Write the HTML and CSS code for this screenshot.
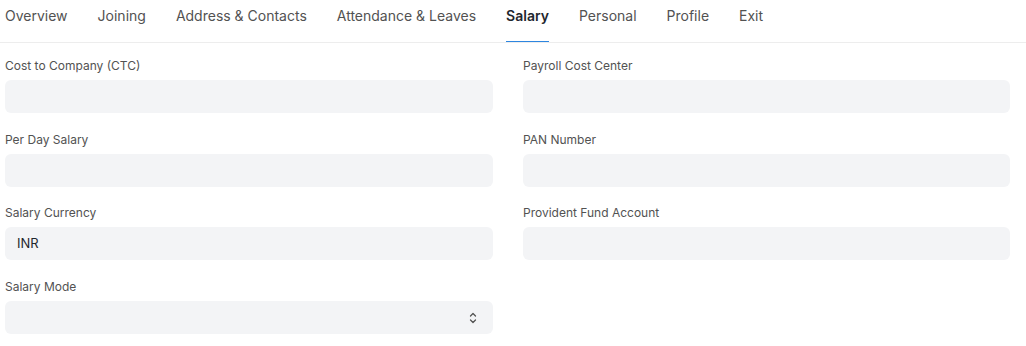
FILE: index.html
```html
<!DOCTYPE html>
<html>
<head>
<meta charset="utf-8">
<link rel="stylesheet" href="styles.css">
</head>
<body>
<nav class="tabs">
  <a class="tab">Overview</a>
  <a class="tab">Joining</a>
  <a class="tab">Address &amp; Contacts</a>
  <a class="tab">Attendance &amp; Leaves</a>
  <a class="tab active">Salary</a>
  <a class="tab">Personal</a>
  <a class="tab">Profile</a>
  <a class="tab">Exit</a>
</nav>
<main class="form">
  <div class="col">
    <div class="field"><label class="label">Cost to Company (CTC)</label><div class="input"></div></div>
    <div class="field"><label class="label">Per Day Salary</label><div class="input"></div></div>
    <div class="field"><label class="label">Salary Currency</label><div class="input">INR</div></div>
    <div class="field"><label class="label">Salary Mode</label><div class="input select">
      <svg class="chev" width="10" height="14" viewBox="0 0 10 14"><path d="M2.5 5 L5 2.5 L7.5 5 M2.5 9 L5 11.5 L7.5 9" fill="none" stroke="#525252" stroke-width="1.3" stroke-linecap="round" stroke-linejoin="round"/></svg>
    </div></div>
  </div>
  <div class="col">
    <div class="field"><label class="label">Payroll Cost Center</label><div class="input"></div></div>
    <div class="field"><label class="label">PAN Number</label><div class="input"></div></div>
    <div class="field"><label class="label">Provident Fund Account</label><div class="input"></div></div>
  </div>
</main>
</body>
</html>
```
FILE: styles.css
```css
* { box-sizing: border-box; }
body {
  margin: 0;
  background: #fff;
  font-family: Inter, "Noto Sans", sans-serif;
  color: #1f272e;
}
.tabs {
  display: flex;
  gap: 30px;
  padding-left: 5px;
  border-bottom: 1px solid #ededed;
  height: 43px;
}
.tab {
  display: block;
  font-size: 14px;
  line-height: 20px;
  padding: 6px 0 15px;
  color: #525252;
  border-bottom: 1px solid transparent;
  height: 42px;
}
.tab.active {
  color: #1f272e;
  font-weight: 600;
  border-bottom-color: #2d86e0;
}
.form {
  display: grid;
  grid-template-columns: 488px 487px;
  column-gap: 30px;
  padding: 14px 0 0 5px;
}
.field {
  display: flex;
  flex-direction: column;
  margin-bottom: 17.67px;
}
.label {
  font-size: 12px;
  line-height: 18px;
  color: #525252;
  margin-bottom: 5px;
}
.input {
  height: 33px;
  background: #f3f4f6;
  border-radius: 6px;
  padding: 0 12px;
  font-size: 13px;
  line-height: 33px;
  color: #1f272e;
  position: relative;
}
.chev {
  position: absolute;
  right: 15px;
  top: 10px;
}
```
